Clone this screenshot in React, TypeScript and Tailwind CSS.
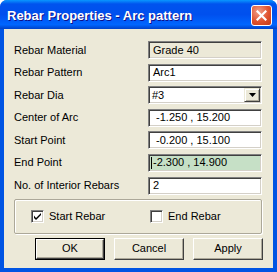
import React from 'react';

const font = { fontFamily: '"Liberation Sans", Arial, sans-serif' };

function Field({ value, bg = 'bg-white', caret = false }: { value: string; bg?: string; caret?: boolean }) {
  return (
    <div
      className={`h-[18px] w-[114px] flex items-center border-t border-l border-[#808080] border-b border-r border-b-white border-r-white ${bg} [box-shadow:inset_1px_1px_#404040,inset_-1px_-1px_#d4d0c8]`}
    >
      {caret && <div className="ml-[2px] h-[12px] w-px bg-black" />}
      <span className={`${caret ? 'ml-px' : 'ml-[4px]'} text-[11px] leading-none text-black whitespace-pre`}>{value}</span>
    </div>
  );
}

function Combo({ value }: { value: string }) {
  return (
    <div className="h-[18px] w-[114px] flex items-center border-t border-l border-[#808080] border-b border-r border-b-white border-r-white bg-white [box-shadow:inset_1px_1px_#404040,inset_-1px_-1px_#d4d0c8]">
      <span className="ml-[3px] flex-1 text-[11px] leading-none text-black">{value}</span>
      <div className="mr-px h-[14px] w-[16px] flex items-center justify-center bg-[#ece9d8] border-t border-l border-[#ece9d8] border-b border-r border-b-[#404040] border-r-[#404040] [box-shadow:inset_1px_1px_white,inset_-1px_-1px_#aca899]">
        <svg width="7" height="4" viewBox="0 0 7 4">
          <path d="M0 0h7L3.5 4z" fill="black" />
        </svg>
      </div>
    </div>
  );
}

function Check({ checked, label }: { checked: boolean; label: string }) {
  return (
    <div className="flex items-center gap-[5px]">
      <div className="h-[13px] w-[13px] flex items-center justify-center bg-white border-t border-l border-[#808080] border-b border-r border-b-white border-r-white [box-shadow:inset_1px_1px_#404040,inset_-1px_-1px_#d4d0c8]">
        {checked && (
          <svg width="7" height="7" viewBox="0 0 7 7">
            <path d="M0 2.5v2.5l2 2 5-5V0L2 5z" fill="black" />
          </svg>
        )}
      </div>
      <span className="text-[11px] leading-none text-black">{label}</span>
    </div>
  );
}

function Button({ label, isDefault = false }: { label: string; isDefault?: boolean }) {
  return (
    <div className={`h-[22px] w-[70px] ${isDefault ? 'border border-black' : ''}`}>
      <div className="h-full w-full flex items-center justify-center bg-[#ece9d8] border-t border-l border-white border-b border-r border-b-[#404040] border-r-[#404040] [box-shadow:inset_-1px_-1px_#aca899]">
        <span className="text-[11px] leading-none text-black">{label}</span>
      </div>
    </div>
  );
}

const rows: { label: string; el: React.ReactNode }[] = [
  { label: 'Rebar Material', el: <Field value="Grade 40" bg="bg-[#ece9d8]" /> },
  { label: 'Rebar Pattern', el: <Field value="Arc1" /> },
  { label: 'Rebar Dia', el: <Combo value="#3" /> },
  { label: 'Center of Arc', el: <Field value=" -1.250 , 15.200" /> },
  { label: 'Start Point', el: <Field value=" -0.200 , 15.100" /> },
  { label: 'End Point', el: <Field value="-2.300 , 14.900" bg="bg-[#c6e0c6]" caret /> },
  { label: 'No. of Interior Rebars', el: <Field value="2" /> },
];

export default function App() {
  return (
    <div className="w-[277px] h-[272px] flex flex-col bg-[#0054e3] rounded-t-[7px] overflow-hidden" style={font}>
      <div className="h-[29px] flex items-center justify-between pl-[7px] pr-[5px] pt-[2px] bg-[linear-gradient(to_bottom,#0997ff_0px,#0053ee_4px,#0050ee_50%,#0066ff_85%,#0041c8_100%)]">
        <span className="text-[13px] font-bold text-white leading-none [text-shadow:1px_1px_#0f1089]">
          Rebar Properties - Arc pattern
        </span>
        <div className="h-[21px] w-[21px] rounded-[3px] border border-white flex items-center justify-center bg-[radial-gradient(circle_at_35%_30%,#f0a08a,#e0532f_55%,#c43a17)]">
          <svg width="11" height="11" viewBox="0 0 11 11">
            <path d="M1.5 1.5l8 8M9.5 1.5l-8 8" stroke="white" strokeWidth="2.2" strokeLinecap="square" />
          </svg>
        </div>
      </div>
      <div className="flex-1 mx-[4px] mb-[4px] bg-[#ece9d8] flex flex-col pt-[12px] pl-[10px] pr-[10px]">
        <div className="flex flex-col gap-[4.6px]">
          {rows.map((r) => (
            <div key={r.label} className="flex items-center">
              <span className="w-[134px] text-[11px] leading-none text-black">{r.label}</span>
              {r.el}
            </div>
          ))}
        </div>
        <div className="mt-[4px] h-[35px] w-[248px] flex items-center pl-[16px] border border-[#aca899] [box-shadow:inset_1px_1px_white,1px_1px_white] rounded-[2px]">
          <div className="w-[119px]">
            <Check checked label="Start Rebar" />
          </div>
          <Check checked={false} label="End Rebar" />
        </div>
        <div className="mt-[4px] flex justify-end gap-[9px]">
          <Button label="OK" isDefault />
          <Button label="Cancel" />
          <Button label="Apply" />
        </div>
      </div>
    </div>
  );
}
